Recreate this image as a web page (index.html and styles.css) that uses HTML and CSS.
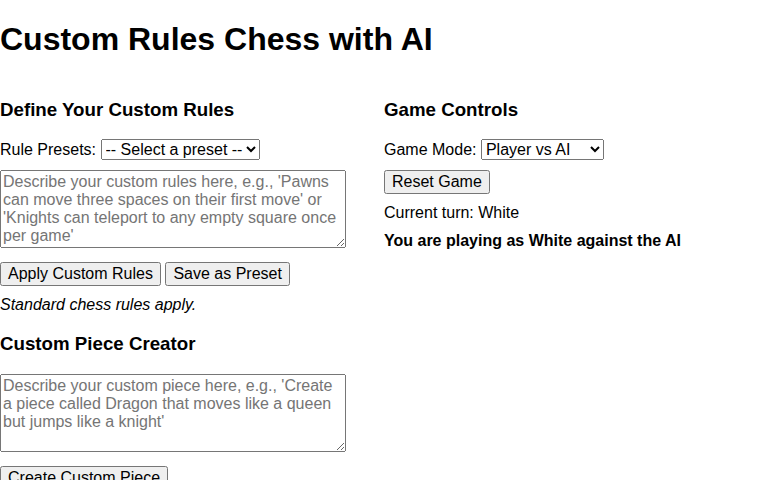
FILE: index.html
```html
<!DOCTYPE html>
<html lang="en">
<head>
<meta charset="utf-8">
<title>Custom Rules Chess with AI</title>
<link rel="stylesheet" href="styles.css">
</head>
<body>
<h1>Custom Rules Chess with AI</h1>
<div class="layout">
  <div class="panel">
    <h3>Define Your Custom Rules</h3>
    <div class="row">
      <label for="preset">Rule Presets:</label>
      <select id="preset"><option>-- Select a preset --</option></select>
    </div>
    <div class="row">
      <textarea class="rules-text" rows="4" placeholder="Describe your custom rules here, e.g., 'Pawns can move three spaces on their first move' or 'Knights can teleport to any empty square once per game'"></textarea>
    </div>
    <div class="row">
      <button>Apply Custom Rules</button>
      <button>Save as Preset</button>
    </div>
    <p class="status">Standard chess rules apply.</p>
    <h3>Custom Piece Creator</h3>
    <div class="row">
      <textarea class="rules-text" rows="4" placeholder="Describe your custom piece here, e.g., 'Create a piece called Dragon that moves like a queen but jumps like a knight'"></textarea>
    </div>
    <div class="row">
      <button>Create Custom Piece</button>
    </div>
  </div>
  <div class="panel">
    <h3>Game Controls</h3>
    <div class="row">
      <label for="mode">Game Mode:</label>
      <select id="mode" class="mode-select"><option>Player vs AI</option><option>Player vs Player</option></select>
    </div>
    <div class="row">
      <button>Reset Game</button>
    </div>
    <div class="row">Current turn: White</div>
    <div class="row strong">You are playing as White against the AI</div>
  </div>
</div>
</body>
</html>
```
FILE: styles.css
```css
body {
  margin: 0;
  font-family: "Liberation Sans", Arial, sans-serif;
  font-size: 16px;
  color: #000;
  background: #fff;
}
h1 {
  font-size: 32px;
  margin: 21.44px 0;
}
h3 {
  font-size: 18.72px;
  margin: 18.72px 0;
}
.layout {
  display: flex;
}
.panel {
  flex: 1;
}
.row {
  margin: 10px 0;
}
select, button, textarea {
  font-family: "Liberation Sans", Arial, sans-serif;
  font-size: 16px;
}
.rules-text {
  width: 340px;
  padding: 2px;
  box-sizing: content-box;
}
.mode-select {
  width: 123px;
}
.status {
  font-style: italic;
  margin: 10px 0;
}
.strong {
  font-weight: bold;
}
```
